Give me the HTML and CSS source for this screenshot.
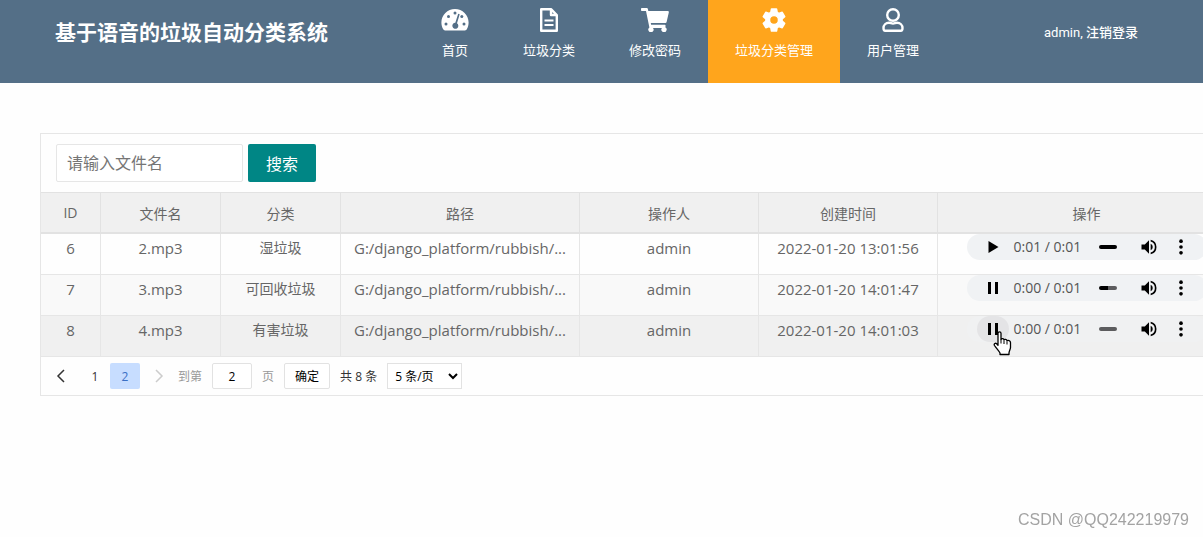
FILE: index.html
```html
<!DOCTYPE html>
<html lang="zh-CN">
<head>
  <meta charset="UTF-8">
  <meta name="viewport" content="width=device-width, initial-scale=1.0">
  <title>基于语音的垃圾自动分类系统</title>
  <link rel="stylesheet" href="styles.css">
</head>
<body>

<header class="header">
  <h1 class="logo">基于语音的垃圾自动分类系统</h1>
  <nav class="nav">
    <a href="#">
      <svg width="28" height="24" viewBox="0 0 28 24"><path fill="#fff" d="M14 1C6.500 1 .4 7 .4 14.500c0 2.500.6 4.800 1.800 6.800.4.600 1 1.100 1.800 1.100h20c.8 0 1.400-.5 1.800-1.100 1.200-2 1.800-4.300 1.800-6.800C27.600 7 21.500 1 14 1z"/><g fill="#546f87"><circle cx="5" cy="16" r="1.500"/><circle cx="7.500" cy="8.500" r="1.500"/><circle cx="14" cy="5" r="1.500"/><circle cx="20.800" cy="8.500" r="1.500"/><circle cx="23" cy="16" r="1.500"/><path d="M17.200 5.800l1.500.5-2.700 9a3 3 0 1 1-1.700-.5z"/></g></svg>
      <span>首页</span>
    </a>
    <a href="#">
      <svg width="20" height="24" viewBox="0 0 20 24"><path fill="none" stroke="#fff" stroke-width="2.400" stroke-linejoin="round" d="M2.200 1.200h9.800l5.800 5.800v15.800H2.200zM12 1.200V7h5.800"/><path stroke="#fff" stroke-width="2" d="M5.500 12.500h9M5.500 17h9"/></svg>
      <span>垃圾分类</span>
    </a>
    <a href="#">
      <svg width="28" height="24" viewBox="0 0 28 24"><path fill="#fff" d="M.8 0h5c.6 0 1 .4 1.100.9L7.300 3h19.400c.8 0 1.300.7 1.100 1.400l-2.200 9.700c-.1.500-.6.900-1.100.9H9.800l.3 1.700h13.400c.7 0 1.300.7 1.100 1.400l-.3 1.200a2.600 2.600 0 1 1-3.400.7H12a2.600 2.600 0 1 1-3.600-.5L5 3H.8C.4 3 0 2.600 0 2.200V.8C0 .4.400 0 .8 0z"/></svg>
      <span>修改密码</span>
    </a>
    <a href="#" class="active">
      <svg width="24" height="24" viewBox="0 0 24 24"><path fill="#fff" stroke="#fff" stroke-width="1.500" stroke-linejoin="round" fill-rule="evenodd" d="M9.500 1h5l.7 3.400 1.700 1 3.300-1.100 2.500 4.300-2.600 2.300v2.200l2.600 2.300-2.500 4.300-3.300-1.100-1.700 1-.7 3.400h-5l-.7-3.400-1.700-1-3.300 1.100-2.500-4.300 2.600-2.300v-2.200L1.300 8.600l2.500-4.300 3.300 1.100 1.700-1zM12 7.500a4.500 4.500 0 1 0 0 9 4.500 4.500 0 0 0 0-9z"/></svg>
      <span>垃圾分类管理</span>
    </a>
    <a href="#">
      <svg width="22" height="24" viewBox="0 0 22 24"><g fill="none" stroke="#fff" stroke-width="2.400" stroke-linejoin="round"><circle cx="11" cy="7" r="5.800"/><path d="M7 14.800c1.800 0 2.200.8 4 .8s2.200-.8 4-.8c3.200 0 5.500 2.400 5.500 5.300 0 1.500-.6 2.700-1.700 2.700H3.200c-1.100 0-1.700-1.200-1.700-2.700 0-2.900 2.300-5.300 5.500-5.300z"/></g></svg>
      <span>用户管理</span>
    </a>
  </nav>
  <div class="user">admin, <a href="#">注销登录</a></div>
</header>

<main class="panel">
  <form class="toolbar">
    <input type="text" placeholder="请输入文件名" aria-label="文件名">
    <button type="button">搜索</button>
  </form>

  <table class="list">
    <colgroup>
      <col class="w-id"><col class="w-name"><col class="w-name"><col class="w-path"><col class="w-mid"><col class="w-mid"><col class="w-audio">
    </colgroup>
    <thead>
      <tr><th>ID</th><th>文件名</th><th>分类</th><th>路径</th><th>操作人</th><th>创建时间</th><th>操作</th></tr>
    </thead>
    <tbody>
      <tr>
        <td>6</td><td>2.mp3</td><td class="cn">湿垃圾</td><td>G:/django_platform/rubbish/...</td><td>admin</td><td>2022-01-20 13:01:56</td>
        <td>
          <div class="audio">
            <button type="button" class="play" aria-label="播放"><svg width="20" height="20" viewBox="0 0 20 20"><path d="M5.500 4v12l10-6z"/></svg></button>
            <span class="time">0:01 / 0:01</span>
            <input type="range" class="full" value="100" aria-label="进度">
            <button type="button" aria-label="音量"><svg width="20" height="20" viewBox="0 0 24 24"><path d="M3 9v6h4l5 5V4L7 9zm13.500 3A4.500 4.500 0 0 0 14 7.970v8.050A4.500 4.500 0 0 0 16.500 12zM14 3.230v2.060a7 7 0 0 1 0 13.420v2.060a9 9 0 0 0 0-17.540z"/></svg></button>
            <button type="button" aria-label="更多"><svg width="20" height="20" viewBox="0 0 24 24"><circle cx="12" cy="5" r="2.200"/><circle cx="12" cy="12" r="2.200"/><circle cx="12" cy="19" r="2.200"/></svg></button>
          </div>
        </td>
      </tr>
      <tr class="even">
        <td>7</td><td>3.mp3</td><td class="cn">可回收垃圾</td><td>G:/django_platform/rubbish/...</td><td>admin</td><td>2022-01-20 14:01:47</td>
        <td>
          <div class="audio">
            <button type="button" class="play" aria-label="暂停"><svg width="20" height="20" viewBox="0 0 20 20"><path d="M5 4h3v12H5zM12 4h3v12h-3z"/></svg></button>
            <span class="time">0:00 / 0:01</span>
            <input type="range" class="half" value="50" aria-label="进度">
            <button type="button" aria-label="音量"><svg width="20" height="20" viewBox="0 0 24 24"><path d="M3 9v6h4l5 5V4L7 9zm13.500 3A4.500 4.500 0 0 0 14 7.970v8.050A4.500 4.500 0 0 0 16.500 12zM14 3.230v2.060a7 7 0 0 1 0 13.420v2.060a9 9 0 0 0 0-17.540z"/></svg></button>
            <button type="button" aria-label="更多"><svg width="20" height="20" viewBox="0 0 24 24"><circle cx="12" cy="5" r="2.200"/><circle cx="12" cy="12" r="2.200"/><circle cx="12" cy="19" r="2.200"/></svg></button>
          </div>
        </td>
      </tr>
      <tr class="hover">
        <td>8</td><td>4.mp3</td><td class="cn">有害垃圾</td><td>G:/django_platform/rubbish/...</td><td>admin</td><td>2022-01-20 14:01:03</td>
        <td>
          <div class="audio">
            <button type="button" class="play on" aria-label="暂停">
              <svg width="20" height="20" viewBox="0 0 20 20"><path d="M5 4h3v12H5zM12 4h3v12h-3z"/></svg>
              <svg class="pointer" width="19" height="25" viewBox="0 0 19 25"><path fill="#fff" stroke="#000" stroke-width="1.300" stroke-linejoin="round" d="M5 2.200C5 .4 8 .4 8 2.200v6.300c.5-1.300 3-1.100 3 .5.700-1 3-.8 3 .9.900-.9 3.500-.5 3.500 1.600v5c0 2-1.500 3.500-1.500 5.500v1.500H7V22c-1.500-2.500-3.500-4.500-5.500-7.500-1-1.700 1-3 2.200-1.700L5 14.300z"/><path stroke="#000" d="M8 8.500v4M11 9.500v3.500M14 10.500v3"/></svg>
            </button>
            <span class="time">0:00 / 0:01</span>
            <input type="range" value="0" aria-label="进度">
            <button type="button" aria-label="音量"><svg width="20" height="20" viewBox="0 0 24 24"><path d="M3 9v6h4l5 5V4L7 9zm13.500 3A4.500 4.500 0 0 0 14 7.970v8.050A4.500 4.500 0 0 0 16.500 12zM14 3.230v2.060a7 7 0 0 1 0 13.420v2.060a9 9 0 0 0 0-17.540z"/></svg></button>
            <button type="button" aria-label="更多"><svg width="20" height="20" viewBox="0 0 24 24"><circle cx="12" cy="5" r="2.200"/><circle cx="12" cy="12" r="2.200"/><circle cx="12" cy="19" r="2.200"/></svg></button>
          </div>
        </td>
      </tr>
    </tbody>
  </table>

  <div class="pager">
    <a href="#" class="page" aria-label="上一页"><svg width="10" height="14" viewBox="0 0 10 14"><path fill="none" stroke="#333" stroke-width="1.500" d="M8 1L2 7l6 6"/></svg></a>
    <a href="#" class="page">1</a>
    <a href="#" class="page current">2</a>
    <a href="#" class="page next" aria-label="下一页"><svg width="10" height="14" viewBox="0 0 10 14"><path fill="none" stroke="#ccc" stroke-width="1.500" d="M2 1l6 6-6 6"/></svg></a>
    <label class="skip">到第 <input type="text" value="2"> 页</label>
    <button type="button">确定</button>
    <span class="count">共 8 条</span>
    <select aria-label="每页条数">
      <option>5 条/页</option>
      <option>10 条/页</option>
    </select>
  </div>
</main>

<div class="watermark">CSDN @QQ242219979</div>

</body>
</html>
```

FILE: styles.css
```css
* {
  box-sizing: border-box;
}
body {
  margin: 0;
  background-color: #fefefe;
  color: #666;
  font-family: "Open Sans", "Noto Sans CJK SC", sans-serif;
  font-size: 14px;
  overflow-x: hidden;
}
a {
  color: inherit;
  text-decoration: none;
}
button, input, select {
  font-family: inherit;
  margin: 0;
}
.header {
  display: flex;
  height: 83px;
  padding: 0 65px 0 55px;
  background-color: #546f87;
  color: #fff;
}
.logo {
  margin: 0;
  font-size: 21px;
  line-height: 64px;
  white-space: nowrap;
}
.nav {
  display: flex;
  margin-left: 86px;
}
.nav a {
  display: flex;
  flex-direction: column;
  align-items: center;
  gap: 8px;
  padding: 8px 27px 0;
  font-size: 13px;
  line-height: 20px;
  white-space: nowrap;
}
.nav .active {
  background-color: #ffa51c;
}
.user {
  margin-left: auto;
  font-family: Roboto, "Noto Sans CJK SC", sans-serif;
  font-size: 13px;
  line-height: 66px;
  white-space: nowrap;
}
.user a {
  font-weight: 500;
}
.panel {
  margin: 50px 0 0 40px;
  border: 1px solid #e6e6e6;
  border-right: none;
  overflow: hidden;
}
.toolbar {
  display: flex;
  gap: 5px;
  padding: 10px 15px;
}
.toolbar input {
  width: 187px;
  height: 38px;
  padding: 0 10px;
  border: 1px solid #e6e6e6;
  border-radius: 2px;
  background-color: #fff;
  font-size: 16px;
}
.toolbar input::placeholder {
  color: #757575;
}
.toolbar button {
  height: 38px;
  padding: 0 18px;
  border: none;
  border-radius: 2px;
  background-color: #008685;
  color: #fff;
  font-size: 16px;
}
/* 数据表格 */
.list {
  width: 1195px;
  table-layout: fixed;
  border-collapse: separate;
  border-spacing: 0;
}
.w-id { width: 60px; }
.w-name { width: 120px; }
.w-path { width: 239px; }
.w-mid { width: 179px; }
.w-audio { width: 298px; }
.list th {
  height: 42px;
  padding: 0;
  border: solid #e2e2e2;
  border-width: 1px 1px 2px 0;
  background-color: #f0f0f0;
  font-size: 14px;
  font-weight: normal;
}
.list td {
  height: 41px;
  padding: 0;
  border: solid #e6e6e6;
  border-width: 0 1px 1px 0;
  font-size: 15px;
  line-height: 28px;
  text-align: center;
  vertical-align: top;
  white-space: nowrap;
}
.list .cn {
  font-size: 14px;
}
.even {
  background-color: #f9f9f9;
}
.hover {
  background-color: #f0f0f0;
}
/* 播放器 */
.audio {
  display: flex;
  align-items: center;
  width: 240px;
  height: 26px;
  margin: 0 auto;
  padding: 0 10px;
  border-radius: 13px;
  background-color: #f0f2f4;
}
.hover .audio {
  background-color: #f0f1f2;
}
.audio button {
  position: relative;
  display: flex;
  align-items: center;
  justify-content: center;
  width: 32px;
  height: 26px;
  padding: 0;
  border: none;
  border-radius: 13px;
  background: none;
}
.audio .on {
  background-color: #e4e4e6;
}
.time {
  width: 90px;
  padding-left: 5px;
  color: #555;
  font-size: 14px;
  text-align: left;
}
.audio input {
  appearance: none;
  width: 18px;
  height: 4px;
  margin-right: 16px;
  border-radius: 2px;
  background: #5c5c5e;
}
.audio input::-webkit-slider-thumb {
  appearance: none;
  width: 0;
  height: 0;
}
.audio .full {
  background: #000;
}
.audio .half {
  background: linear-gradient(to right, #000 50%, #5c5c5e 50%);
}
.pointer {
  position: absolute;
  left: 16px;
  top: 15px;
}
/* 分页 */
.pager {
  display: flex;
  align-items: center;
  height: 38px;
  padding-left: 5px;
  font-size: 12px;
  color: #333;
}
.page {
  display: flex;
  align-items: center;
  justify-content: center;
  width: 30px;
  height: 26px;
}
.page:first-child {
  margin-right: 4px;
}
.current {
  border-radius: 2px;
  background-color: #c7ddff;
  color: #3a6fc4;
}
.next {
  margin: 0 4px;
}
.skip {
  display: flex;
  align-items: center;
  gap: 10px;
  color: #999;
}
.skip input {
  width: 40px;
  height: 26px;
  padding: 0;
  border: 1px solid #e2e2e2;
  border-radius: 2px;
  color: #000;
  font-size: 12px;
  text-align: center;
}
.pager button {
  height: 26px;
  margin: 0 10px;
  padding: 0 10px;
  border: 1px solid #e2e2e2;
  border-radius: 2px;
  background-color: #fff;
  color: #000;
  font-size: 12px;
}
.pager select {
  width: 75px;
  height: 26px;
  margin-left: 10px;
  padding: 0 3px;
  border: 1px solid #e2e2e2;
  background-color: #fff;
  color: #000;
  font-size: 12px;
}
.watermark {
  position: fixed;
  right: 14px;
  bottom: 8px;
  color: #a3a3a3;
  font-family: "Liberation Sans", Arial, sans-serif;
  font-size: 16px;
}
```
